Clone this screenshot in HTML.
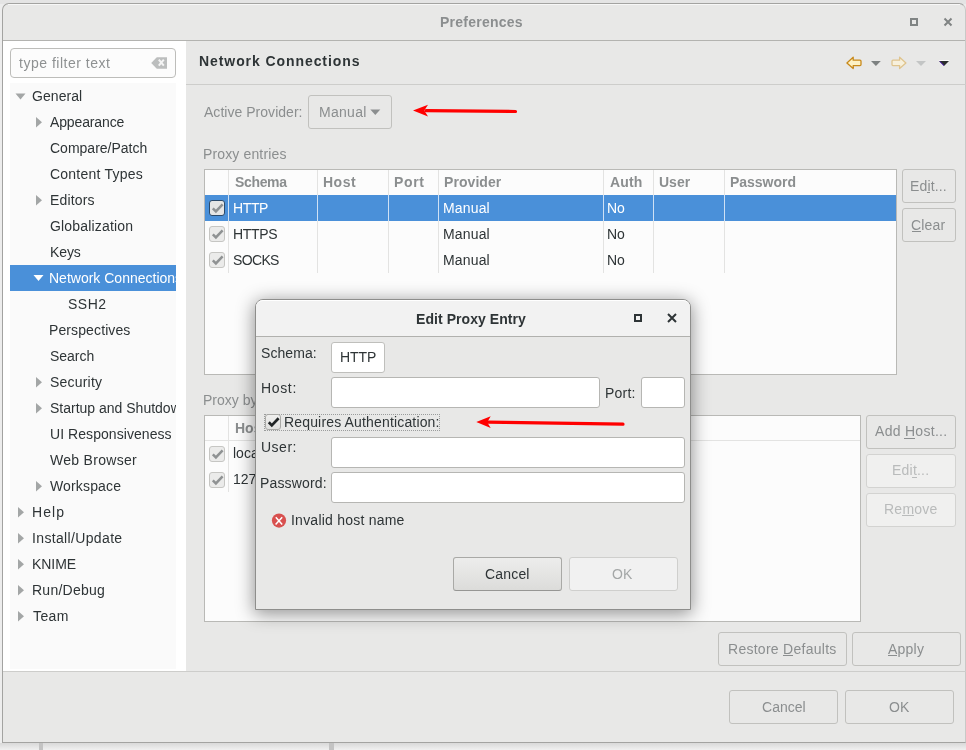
<!DOCTYPE html>
<html><head><meta charset="utf-8">
<style>
*{box-sizing:border-box}
html,body{margin:0;padding:0}
body{width:966px;height:750px;overflow:hidden;position:relative;background:#ededed;font-family:"Liberation Sans",sans-serif;font-size:14px;color:#2e3436}
.a{position:absolute}
.t{position:absolute;white-space:nowrap;line-height:16px;will-change:transform}
.btn{position:absolute;border:1px solid #c1c1be;border-radius:3px;background:#e8e8e7}
.ent{position:absolute;border:1px solid #b6b6b3;border-radius:3px;background:#fff}
.ul{position:absolute;height:1px}
.cb{position:absolute;width:16px;height:16px;border:1px solid #c6c6c3;border-radius:3px;background:#ebebea}
.vs{position:absolute;width:1px;background:#e3e3e2}
</style></head><body>
<!-- outside -->
<div class="a" style="left:0;top:0;width:966px;height:4px;background:#e4e4e4"></div>
<div class="a" style="left:0;top:743px;width:966px;height:7px;background:linear-gradient(#d9d9d9,#f0f0f0)"></div>
<div class="a" style="left:39px;top:743px;width:4px;height:7px;background:#c3c3c3"></div>
<div class="a" style="left:329px;top:743px;width:5px;height:7px;background:#c3c3c3"></div>

<!-- main window frame -->
<div class="a" style="left:2px;top:3px;width:964px;height:740px;border:1px solid #a3a3a1;border-right-color:#c9c9c7;border-radius:7px 7px 0 0;background:#e8e8e7"></div>
<div class="a" style="left:8px;top:4px;width:952px;height:1px;background:#f7f7f7"></div>
<div class="a" style="left:3px;top:40px;width:962px;height:1px;background:#b3b3b0"></div>
<svg class="a" style="left:909px;top:17px" width="10" height="10"><rect x="2" y="2" width="6" height="6" fill="none" stroke="#808484" stroke-width="2"/></svg>
<svg class="a" style="left:943px;top:17px" width="10" height="10"><path d="M1.5 1.5L8.5 8.5M8.5 1.5L1.5 8.5" stroke="#808484" stroke-width="2"/></svg>

<!-- left pane -->
<div class="a" style="left:3px;top:41px;width:183px;height:630px;background:#fff"></div>
<div class="a" style="left:10px;top:83px;width:166px;height:586px;background:#fafafa"></div>
<div class="a" style="left:10px;top:48px;width:166px;height:30px;border:1px solid #bdbdba;border-radius:4px;background:#fcfcfc"></div>
<svg class="a" style="left:151px;top:57px" width="17" height="13"><path d="M0.2 6L5.8 0.2H16V11.8H5.8Z" fill="#bcbebe"/><path d="M7.8 2.6L12.8 8.6M12.8 2.6L7.8 8.6" stroke="#f4f4f4" stroke-width="2"/></svg>
<div class="a" style="left:10px;top:265px;width:166px;height:26px;background:#4a90d9"></div>
<svg class="a" style="left:0;top:80px" width="60" height="550">
 <g fill="#a3a6a6">
  <path d="M15.5 13.5H25.5L20.5 19.5Z"/>
 </g>
</svg>
<svg class="a" style="left:0;top:0" width="60" height="640">
 <g fill="#a3a6a6">
  <path d="M36 117L42 122.3L36 127.6Z"/>
  <path d="M36 195L42 200.3L36 205.6Z"/>
  <path d="M36 377L42 382.3L36 387.6Z"/>
  <path d="M36 403L42 408.3L36 413.6Z"/>
  <path d="M36 481L42 486.3L36 491.6Z"/>
  <path d="M18 507L24 512.3L18 517.6Z"/>
  <path d="M18 533L24 538.3L18 543.6Z"/>
  <path d="M18 559L24 564.3L18 569.6Z"/>
  <path d="M18 585L24 590.3L18 595.6Z"/>
  <path d="M18 611L24 616.3L18 621.6Z"/>
 </g>
 <path d="M33.5 275H43.5L38.5 281Z" fill="#fff"/>
</svg>

<!-- right pane header -->
<div class="a" style="left:186px;top:84px;width:780px;height:1px;background:#cdcdcb"></div>
<svg class="a" style="left:840px;top:50px" width="126" height="26">
 <path d="M6.9 12.9L13.2 7.3V10.2H20Q21 10.2 21 11.2V14.6Q21 15.6 20 15.6H13.2V18.6Z" fill="#fdf1c4" stroke="#c8891a" stroke-width="1.3" stroke-linejoin="round"/>
 <path d="M31 11H40.8L35.9 15.9Z" fill="#7d8181"/>
 <path d="M65.9 12.9L59.6 7.3V10.2H53Q52 10.2 52 11.2V14.6Q52 15.6 53 15.6H59.6V18.6Z" fill="#f7f0dc" stroke="#dfc48e" stroke-width="1.3" stroke-linejoin="round"/>
 <path d="M76 11H86L81 16Z" fill="#c3c5c5"/>
 <path d="M99 11H109L104 16Z" fill="#2a2d2e"/>
 <path d="M99.6 11.3L104 15.6" stroke="#5b22c0" stroke-width="1"/>
 <path d="M99 10.5H109" stroke="#fff" stroke-width="0.8"/>
</svg>

<!-- active provider -->
<div class="btn" style="left:308px;top:95px;width:84px;height:34px"></div>
<svg class="a" style="left:368px;top:106px" width="16" height="12"><path d="M2.3 3.6H12.3L7.3 8.9Z" fill="#8b8e8f"/></svg>

<!-- proxy entries table -->
<div class="a" style="left:204px;top:169px;width:693px;height:206px;border:1px solid #b9b9b6;background:#fcfcfc"></div>
<div class="a" style="left:205px;top:195px;width:691px;height:26px;background:#4a90d9"></div>
<div class="vs" style="left:228px;top:170px;height:103px"></div>
<div class="vs" style="left:317px;top:170px;height:103px"></div>
<div class="vs" style="left:388px;top:170px;height:103px"></div>
<div class="vs" style="left:438px;top:170px;height:103px"></div>
<div class="vs" style="left:603px;top:170px;height:103px"></div>
<div class="vs" style="left:653px;top:170px;height:103px"></div>
<div class="vs" style="left:724px;top:170px;height:103px"></div>
<div class="a" style="left:228px;top:195px;width:1px;height:26px;background:#cfe1f5"></div>
<div class="a" style="left:317px;top:195px;width:1px;height:26px;background:#cfe1f5"></div>
<div class="a" style="left:388px;top:195px;width:1px;height:26px;background:#cfe1f5"></div>
<div class="a" style="left:438px;top:195px;width:1px;height:26px;background:#cfe1f5"></div>
<div class="a" style="left:603px;top:195px;width:1px;height:26px;background:#cfe1f5"></div>
<div class="a" style="left:653px;top:195px;width:1px;height:26px;background:#cfe1f5"></div>
<div class="a" style="left:724px;top:195px;width:1px;height:26px;background:#cfe1f5"></div>
<div class="cb" style="left:209px;top:200px;border-color:#2b4a6b;background:#e6e6e5"></div>
<div class="cb" style="left:209px;top:226px"></div>
<div class="cb" style="left:209px;top:252px"></div>
<svg class="a" style="left:209px;top:200px" width="16" height="70">
 <g fill="none" stroke="#8f9293" stroke-width="2.5">
  <path d="M3.8 8.3L6.9 11.4L13.6 4.4"/>
  <path d="M3.8 34.3L6.9 37.4L13.6 30.4"/>
  <path d="M3.8 60.3L6.9 63.4L13.6 56.4"/>
 </g>
</svg>
<div class="btn" style="left:902px;top:169px;width:54px;height:34px"></div>
<div class="btn" style="left:902px;top:208px;width:54px;height:34px"></div>
<div class="ul" style="left:927px;top:192px;width:3px;background:#8b8e8f"></div>
<div class="ul" style="left:912px;top:231px;width:9px;background:#8b8e8f"></div>

<!-- proxy bypass table -->
<div class="a" style="left:204px;top:415px;width:657px;height:207px;border:1px solid #b9b9b6;background:#fcfcfc"></div>
<div class="a" style="left:205px;top:440px;width:655px;height:1px;background:#e3e3e2"></div>
<div class="vs" style="left:228px;top:416px;height:76px"></div>
<div class="cb" style="left:209px;top:446px"></div>
<div class="cb" style="left:209px;top:472px"></div>
<svg class="a" style="left:209px;top:446px" width="16" height="44">
 <g fill="none" stroke="#8f9293" stroke-width="2.5">
  <path d="M3.8 8.3L6.9 11.4L13.6 4.4"/>
  <path d="M3.8 34.3L6.9 37.4L13.6 30.4"/>
 </g>
</svg>
<div class="btn" style="left:866px;top:415px;width:90px;height:34px"></div>
<div class="btn" style="left:866px;top:454px;width:90px;height:34px;background:#f0f0ef;border-color:#d3d3d1"></div>
<div class="btn" style="left:866px;top:493px;width:90px;height:34px;background:#f0f0ef;border-color:#d3d3d1"></div>
<div class="ul" style="left:904px;top:438px;width:11px;background:#8b8e8f"></div>
<div class="ul" style="left:912px;top:477px;width:5px;background:#b9bbbb"></div>
<div class="ul" style="left:902px;top:515px;width:12px;background:#b9bbbb"></div>

<!-- bottom buttons -->
<div class="btn" style="left:718px;top:632px;width:129px;height:34px"></div>
<div class="btn" style="left:852px;top:632px;width:109px;height:34px"></div>
<div class="ul" style="left:783px;top:655px;width:10px;background:#8b8e8f"></div>
<div class="ul" style="left:888px;top:655px;width:9px;background:#8b8e8f"></div>
<div class="a" style="left:3px;top:671px;width:963px;height:1px;background:#cdcdcb"></div>
<div class="btn" style="left:729px;top:690px;width:109px;height:34px"></div>
<div class="btn" style="left:845px;top:690px;width:109px;height:34px"></div>

<!-- main texts -->
<div class="t" style="left:440.0px;top:13.7px;color:#8b8e8f;font-size:14px;font-weight:700;letter-spacing:0.24px">Preferences</div>
<div class="t" style="left:19.3px;top:55.0px;color:#8e9192;font-size:14px;font-weight:400;letter-spacing:0.51px">type filter text</div>
<div class="t" style="left:31.8px;top:87.7px;color:#2e3436;font-size:14px;font-weight:400;letter-spacing:0.07px">General</div>
<div class="t" style="left:50.2px;top:113.8px;color:#2e3436;font-size:14px;font-weight:400;letter-spacing:-0.13px">Appearance</div>
<div class="t" style="left:49.5px;top:139.8px;color:#2e3436;font-size:14px;font-weight:400;letter-spacing:0.00px">Compare/Patch</div>
<div class="t" style="left:49.5px;top:165.8px;color:#2e3436;font-size:14px;font-weight:400;letter-spacing:0.22px">Content Types</div>
<div class="t" style="left:49.5px;top:191.8px;color:#2e3436;font-size:14px;font-weight:400;letter-spacing:0.15px">Editors</div>
<div class="t" style="left:49.5px;top:217.8px;color:#2e3436;font-size:14px;font-weight:400;letter-spacing:0.18px">Globalization</div>
<div class="t" style="left:49.5px;top:243.8px;color:#2e3436;font-size:14px;font-weight:400;letter-spacing:-0.10px">Keys</div>
<div class="t" style="left:67.5px;top:295.8px;color:#2e3436;font-size:14px;font-weight:400;letter-spacing:0.50px">SSH2</div>
<div class="t" style="left:49.0px;top:321.8px;color:#2e3436;font-size:14px;font-weight:400;letter-spacing:0.11px">Perspectives</div>
<div class="t" style="left:49.5px;top:347.8px;color:#2e3436;font-size:14px;font-weight:400;letter-spacing:-0.02px">Search</div>
<div class="t" style="left:49.5px;top:373.8px;color:#2e3436;font-size:14px;font-weight:400;letter-spacing:0.20px">Security</div>
<div class="t" style="left:49.5px;top:425.8px;color:#2e3436;font-size:14px;font-weight:400;letter-spacing:0.06px">UI Responsiveness</div>
<div class="t" style="left:50.0px;top:451.8px;color:#2e3436;font-size:14px;font-weight:400;letter-spacing:0.30px">Web Browser</div>
<div class="t" style="left:50.0px;top:477.8px;color:#2e3436;font-size:14px;font-weight:400;letter-spacing:0.15px">Workspace</div>
<div class="t" style="left:31.5px;top:503.8px;color:#2e3436;font-size:14px;font-weight:400;letter-spacing:1.10px">Help</div>
<div class="t" style="left:31.5px;top:529.8px;color:#2e3436;font-size:14px;font-weight:400;letter-spacing:0.35px">Install/Update</div>
<div class="t" style="left:31.5px;top:555.8px;color:#2e3436;font-size:14px;font-weight:400;letter-spacing:-0.07px">KNIME</div>
<div class="t" style="left:31.5px;top:581.8px;color:#2e3436;font-size:14px;font-weight:400;letter-spacing:0.26px">Run/Debug</div>
<div class="t" style="left:32.5px;top:607.8px;color:#2e3436;font-size:14px;font-weight:400;letter-spacing:0.40px">Team</div>
<div class="t" style="left:198.6px;top:53.3px;color:#2e3436;font-size:14px;font-weight:700;letter-spacing:0.92px">Network Connections</div>
<div class="t" style="left:204.3px;top:103.7px;color:#8b8e8f;font-size:14px;font-weight:400;letter-spacing:0.03px">Active Provider:</div>
<div class="t" style="left:318.8px;top:103.7px;color:#8b8e8f;font-size:14px;font-weight:400;letter-spacing:0.28px">Manual</div>
<div class="t" style="left:203.3px;top:146.0px;color:#8b8e8f;font-size:14px;font-weight:400;letter-spacing:0.14px">Proxy entries</div>
<div class="t" style="left:234.7px;top:174.0px;color:#8b8e8f;font-size:14px;font-weight:700;letter-spacing:-0.34px">Schema</div>
<div class="t" style="left:323.4px;top:174.0px;color:#8b8e8f;font-size:14px;font-weight:700;letter-spacing:0.50px">Host</div>
<div class="t" style="left:394.2px;top:174.0px;color:#8b8e8f;font-size:14px;font-weight:700;letter-spacing:0.67px">Port</div>
<div class="t" style="left:444.2px;top:174.0px;color:#8b8e8f;font-size:14px;font-weight:700;letter-spacing:0.07px">Provider</div>
<div class="t" style="left:610.0px;top:174.0px;color:#8b8e8f;font-size:14px;font-weight:700;letter-spacing:0.13px">Auth</div>
<div class="t" style="left:659.0px;top:174.0px;color:#8b8e8f;font-size:14px;font-weight:700;letter-spacing:0.00px">User</div>
<div class="t" style="left:729.8px;top:174.0px;color:#8b8e8f;font-size:14px;font-weight:700;letter-spacing:-0.03px">Password</div>
<div class="t" style="left:232.6px;top:200.0px;color:#ffffff;font-size:14px;font-weight:400;letter-spacing:-0.37px">HTTP</div>
<div class="t" style="left:443.0px;top:200.0px;color:#ffffff;font-size:14px;font-weight:400;letter-spacing:0.16px">Manual</div>
<div class="t" style="left:607.0px;top:200.0px;color:#ffffff;font-size:14px;font-weight:400;letter-spacing:0.00px">No</div>
<div class="t" style="left:232.6px;top:226.0px;color:#2e3436;font-size:14px;font-weight:400;letter-spacing:-0.35px">HTTPS</div>
<div class="t" style="left:443.0px;top:226.0px;color:#2e3436;font-size:14px;font-weight:400;letter-spacing:0.16px">Manual</div>
<div class="t" style="left:607.0px;top:226.0px;color:#2e3436;font-size:14px;font-weight:400;letter-spacing:0.00px">No</div>
<div class="t" style="left:232.6px;top:252.0px;color:#2e3436;font-size:14px;font-weight:400;letter-spacing:-0.65px">SOCKS</div>
<div class="t" style="left:443.0px;top:252.0px;color:#2e3436;font-size:14px;font-weight:400;letter-spacing:0.16px">Manual</div>
<div class="t" style="left:607.0px;top:252.0px;color:#2e3436;font-size:14px;font-weight:400;letter-spacing:0.00px">No</div>
<div class="t" style="left:910.4px;top:177.9px;color:#8b8e8f;font-size:14px;font-weight:400;letter-spacing:0.15px">Edit...</div>
<div class="t" style="left:911.3px;top:217.0px;color:#8b8e8f;font-size:14px;font-weight:400;letter-spacing:0.15px">Clear</div>
<div class="t" style="left:203.3px;top:391.8px;color:#8b8e8f;font-size:14px;font-weight:400;letter-spacing:0.00px">Proxy bypass</div>
<div class="t" style="left:234.8px;top:419.8px;color:#8b8e8f;font-size:14px;font-weight:700;letter-spacing:0.00px">Host</div>
<div class="t" style="left:232.7px;top:445.4px;color:#2e3436;font-size:14px;font-weight:400;letter-spacing:0.00px">localhost</div>
<div class="t" style="left:232.7px;top:471.4px;color:#2e3436;font-size:14px;font-weight:400;letter-spacing:0.00px">127.0.0.1</div>
<div class="t" style="left:874.8px;top:423.2px;color:#8b8e8f;font-size:14px;font-weight:400;letter-spacing:0.29px">Add Host...</div>
<div class="t" style="left:891.7px;top:462.4px;color:#b9bbbb;font-size:14px;font-weight:400;letter-spacing:0.22px">Edit...</div>
<div class="t" style="left:883.5px;top:500.8px;color:#b9bbbb;font-size:14px;font-weight:400;letter-spacing:0.24px">Remove</div>
<div class="t" style="left:728.3px;top:640.6px;color:#8b8e8f;font-size:14px;font-weight:400;letter-spacing:0.27px">Restore Defaults</div>
<div class="t" style="left:887.7px;top:640.6px;color:#8b8e8f;font-size:14px;font-weight:400;letter-spacing:0.22px">Apply</div>
<div class="t" style="left:761.5px;top:698.5px;color:#8b8e8f;font-size:14px;font-weight:400;letter-spacing:0.02px">Cancel</div>
<div class="t" style="left:888.5px;top:698.5px;color:#8b8e8f;font-size:14px;font-weight:400;letter-spacing:0.00px">OK</div>
<div class="a" style="left:10px;top:0;width:166px;height:700px;overflow:hidden">
<div class="a" style="left:-10px;top:0;width:966px;height:700px">
<div class="t" style="left:49.2px;top:269.8px;color:#ffffff;font-size:14px;font-weight:400;letter-spacing:0.00px">Network Connections</div>
<div class="t" style="left:49.5px;top:399.8px;color:#2e3436;font-size:14px;font-weight:400;letter-spacing:0.00px">Startup and Shutdown</div>
</div></div>

<!-- red arrow top -->
<svg class="a" style="left:400px;top:95px" width="130" height="30">
 <path d="M26 15.6L115.5 16.5" stroke="#ff0000" stroke-width="3.2" stroke-linecap="round"/>
 <path d="M13 15.4L28 9.8L24.3 15.6L28 21.4Z" fill="#ff0000"/>
</svg>

<!-- dialog -->
<div class="a" style="left:255px;top:299px;width:436px;height:311px;border:1px solid #8e8e8c;border-radius:8px 8px 0 0;background:#e8e8e7;box-shadow:0 3px 18px 1px rgba(0,0,0,0.42)"></div>
<div class="a" style="left:256px;top:300px;width:434px;height:36px;background:#f2f2f2;border-radius:7px 7px 0 0;border-top:1px solid #fff"></div>
<div class="a" style="left:256px;top:336px;width:434px;height:1px;background:#b1b1ae"></div>
<svg class="a" style="left:632px;top:312px" width="12" height="12"><rect x="3" y="3" width="6" height="6" fill="none" stroke="#2e3436" stroke-width="2"/></svg>
<svg class="a" style="left:666px;top:312px" width="12" height="12"><path d="M2 2L10 10M10 2L2 10" stroke="#2e3436" stroke-width="2"/></svg>
<div class="ent" style="left:331px;top:342px;width:54px;height:31px;border-color:#bfbfbc"></div>
<div class="ent" style="left:331px;top:377px;width:269px;height:31px"></div>
<div class="ent" style="left:641px;top:377px;width:44px;height:31px"></div>
<div class="a" style="left:264px;top:414px;width:176px;height:17px;border:1px dotted #9a9c9c"></div>
<div class="cb" style="left:265px;top:414px;border-color:#a9a9a6;background:linear-gradient(#efefee,#e0e0de)"></div>
<svg class="a" style="left:265px;top:414px" width="16" height="16"><path d="M3.8 8.3L6.8 11.4L13.6 4.2" fill="none" stroke="#1f2324" stroke-width="2.7"/></svg>
<div class="ent" style="left:331px;top:437px;width:354px;height:31px"></div>
<div class="ent" style="left:331px;top:472px;width:354px;height:31px"></div>
<svg class="a" style="left:271px;top:513px" width="16" height="16"><circle cx="8" cy="7.6" r="7.1" fill="#d8504f"/><path d="M4.8 4.2L11.2 11.6M11.2 4.2L4.6 11.6" stroke="#fff" stroke-width="1.5"/></svg>
<div class="btn" style="left:453px;top:557px;width:109px;height:34px;border-color:#a9a9a6;border-bottom-color:#969694;background:linear-gradient(#ededec,#dcdcda)"></div>
<div class="btn" style="left:569px;top:557px;width:109px;height:34px;border-color:#cfcfcd;background:#f1f1f1"></div>
<svg class="a" style="left:460px;top:405px" width="175" height="30">
 <path d="M28 17.2L163 19.2" stroke="#ff0000" stroke-width="3.2" stroke-linecap="round"/>
 <path d="M16.3 17L30.7 11.3L27.2 17.2L30.7 22.9Z" fill="#ff0000"/>
</svg>
<div class="t" style="left:415.7px;top:310.6px;color:#2e3436;font-size:14px;font-weight:700;letter-spacing:0.06px">Edit Proxy Entry</div>
<div class="t" style="left:260.8px;top:344.5px;color:#2e3436;font-size:14px;font-weight:400;letter-spacing:0.07px">Schema:</div>
<div class="t" style="left:339.5px;top:349.1px;color:#2e3436;font-size:14px;font-weight:400;letter-spacing:-0.07px">HTTP</div>
<div class="t" style="left:260.6px;top:380.0px;color:#2e3436;font-size:14px;font-weight:400;letter-spacing:0.65px">Host:</div>
<div class="t" style="left:604.5px;top:384.7px;color:#2e3436;font-size:14px;font-weight:400;letter-spacing:0.20px">Port:</div>
<div class="t" style="left:284.3px;top:414.3px;color:#2e3436;font-size:14px;font-weight:400;letter-spacing:0.16px">Requires Authentication:</div>
<div class="t" style="left:260.5px;top:439.4px;color:#2e3436;font-size:14px;font-weight:400;letter-spacing:0.50px">User:</div>
<div class="t" style="left:260.0px;top:474.7px;color:#2e3436;font-size:14px;font-weight:400;letter-spacing:0.15px">Password:</div>
<div class="t" style="left:291.1px;top:512.3px;color:#2e3436;font-size:14px;font-weight:400;letter-spacing:0.23px">Invalid host name</div>
<div class="t" style="left:484.7px;top:566.0px;color:#2e3436;font-size:14px;font-weight:400;letter-spacing:0.18px">Cancel</div>
<div class="t" style="left:612.0px;top:566.0px;color:#a4a7a7;font-size:14px;font-weight:400;letter-spacing:0.00px">OK</div>
</body></html>
